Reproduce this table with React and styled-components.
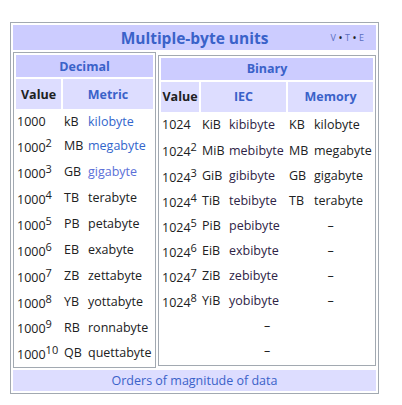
import styled, { createGlobalStyle } from "styled-components";

const GlobalStyle = createGlobalStyle`
    body{
        margin: 0;
        background: #fff;
        font-family: "Open Sans", "Liberation Sans", sans-serif;
        color: #202122;
    }
`

const decimal = [
    { exp: null, sym: "kB", name: "kilobyte", tone: "link" },
    { exp: "2", sym: "MB", name: "megabyte", tone: "link" },
    { exp: "3", sym: "GB", name: "gigabyte", tone: "visited" },
    { exp: "4", sym: "TB", name: "terabyte" },
    { exp: "5", sym: "PB", name: "petabyte" },
    { exp: "6", sym: "EB", name: "exabyte" },
    { exp: "7", sym: "ZB", name: "zettabyte" },
    { exp: "8", sym: "YB", name: "yottabyte" },
    { exp: "9", sym: "RB", name: "ronnabyte" },
    { exp: "10", sym: "QB", name: "quettabyte" },
];
const decimalHeights = [21, 24, 24, 24, 24, 24, 24, 24, 23, 24];

const binary = [
    { exp: null, sym: "KiB", name: "kibibyte", mem: ["KB", "kilobyte"] },
    { exp: "2", sym: "MiB", name: "mebibyte", mem: ["MB", "megabyte"] },
    { exp: "3", sym: "GiB", name: "gibibyte", mem: ["GB", "gigabyte"] },
    { exp: "4", sym: "TiB", name: "tebibyte", mem: ["TB", "terabyte"] },
    { exp: "5", sym: "PiB", name: "pebibyte" },
    { exp: "6", sym: "EiB", name: "exbibyte" },
    { exp: "7", sym: "ZiB", name: "zebibyte" },
    { exp: "8", sym: "YiB", name: "yobibyte" },
    { empty: true },
    { empty: true },
];
const binaryHeights = [23, 24, 23, 23, 23, 23, 23, 23, 23, 23];

const App = ()=>{
    return (
        <Page>
            <GlobalStyle/>
            <Navbox>
                <colgroup>
                    <col style={{width: 143}}/>
                    <col style={{width: 218}}/>
                </colgroup>
                <tbody>
                    <tr>
                        <TitleCell colSpan={2}>
                            <TitleRow>
                                <span/>
                                <Title>Multiple-byte units</Title>
                                <Navbar>
                                    <abbr>V</abbr><b>•</b><abbr>T</abbr><b>•</b><abbr>E</abbr>
                                </Navbar>
                            </TitleRow>
                        </TitleCell>
                    </tr>
                    <tr>
                        <GroupCell>
                            <Group $w={143}>
                                <colgroup>
                                    <col style={{width: 45}}/>
                                    <col style={{width: 22}}/>
                                    <col style={{width: 66}}/>
                                </colgroup>
                                <tbody>
                                    <tr><Head colSpan={3}>Decimal</Head></tr>
                                    <tr>
                                        <SubHead>Value</SubHead>
                                        <SubHead colSpan={2} $link>Metric</SubHead>
                                    </tr>
                                    {decimal.map((row, i)=>{
                                        return <tr key={row.sym} style={{height: decimalHeights[i]}}>
                                            <Cell>1000{row.exp&&<sup>{row.exp}</sup>}</Cell>
                                            <Cell>{row.sym}</Cell>
                                            <Cell $tone={row.tone}>{row.name}</Cell>
                                        </tr>
                                    })}
                                </tbody>
                            </Group>
                        </GroupCell>
                        <GroupCell>
                            <Group $w={218}>
                                <colgroup>
                                    <col style={{width: 38}}/>
                                    <col style={{width: 25}}/>
                                    <col style={{width: 58}}/>
                                    <col style={{width: 23}}/>
                                    <col style={{width: 60}}/>
                                </colgroup>
                                <tbody>
                                    <tr><Head colSpan={5}>Binary</Head></tr>
                                    <tr>
                                        <SubHead>Value</SubHead>
                                        <SubHead colSpan={2} $link>IEC</SubHead>
                                        <SubHead colSpan={2} $link>Memory</SubHead>
                                    </tr>
                                    {binary.map((row, i)=>{
                                        if(row.empty)
                                            return <tr key={i} style={{height: binaryHeights[i]}}>
                                                <Cell colSpan={5} $center>–</Cell>
                                            </tr>
                                        return <tr key={i} style={{height: binaryHeights[i]}}>
                                            <Cell>1024{row.exp&&<sup>{row.exp}</sup>}</Cell>
                                            <Cell>{row.sym}</Cell>
                                            <Cell $tone="dark">{row.name}</Cell>
                                            {row.mem ? <>
                                                <Cell>{row.mem[0]}</Cell>
                                                <Cell>{row.mem[1]}</Cell>
                                            </> : <Cell colSpan={2} $center>–</Cell>}
                                        </tr>
                                    })}
                                </tbody>
                            </Group>
                        </GroupCell>
                    </tr>
                    <tr>
                        <Footer colSpan={2}>Orders of magnitude of data</Footer>
                    </tr>
                </tbody>
            </Navbox>
        </Page>
    )
}
export default App;

const Page = styled.div`
    padding: 22px 0 0 10px;
`

const Navbox = styled.table`
    width: 369px;
    table-layout: fixed;
    border: 1px solid #a2a9b1;
    border-spacing: 2px;
    font-size: 12.5px;
`

const TitleCell = styled.th`
    height: 25px;
    padding: 0;
    background: #ccf;
`

const TitleRow = styled.div`
    display: grid;
    grid-template-columns: 1fr auto 1fr;
    align-items: center;
`

const Title = styled.span`
    font-size: 15.5px;
    font-weight: bold;
    color: #3a62c9;
    white-space: nowrap;
`

const Navbar = styled.div`
    justify-self: end;
    margin-right: 12px;
    font-size: 9px;
    font-weight: normal;
    display: flex;
    align-items: center;
    gap: 3px;
    abbr{
        color: #5a6fbf;
        text-decoration: none;
    }
    b{
        color: #202122;
        font-size: 8px;
    }
`

const GroupCell = styled.td`
    padding: 0;
    vertical-align: middle;
`

const Group = styled.table`
    width: ${p=>p.$w}px;
    table-layout: fixed;
    border: 1px solid #a2a9b1;
    border-spacing: 2px;
`

const Head = styled.th`
    height: 22px;
    padding: 0;
    background: #ccf;
    color: #3a62c9;
    font-size: 12.5px;
    font-weight: bold;
`

const SubHead = styled.th`
    height: 30px;
    padding: 0;
    background: #ddf;
    color: ${p=>p.$link ? "#3a62c9" : "#202122"};
    font-size: 12.5px;
    font-weight: bold;
`

const tones = {
    link: "#3366cc",
    visited: "#5b6fd8",
    dark: "#2e2346",
};

const Cell = styled.td`
    padding: 0 1px;
    white-space: nowrap;
    text-align: ${p=>p.$center ? "center" : "left"};
    color: ${p=>tones[p.$tone] || "#202122"};
    line-height: 16px;
    sup{
        font-size: 11px;
        line-height: 1;
        vertical-align: 5px;
    }
`

const Footer = styled.th`
    height: 21px;
    padding: 0;
    background: #ddf;
    color: #3a62c9;
    font-weight: normal;
    font-size: 12.5px;
`
